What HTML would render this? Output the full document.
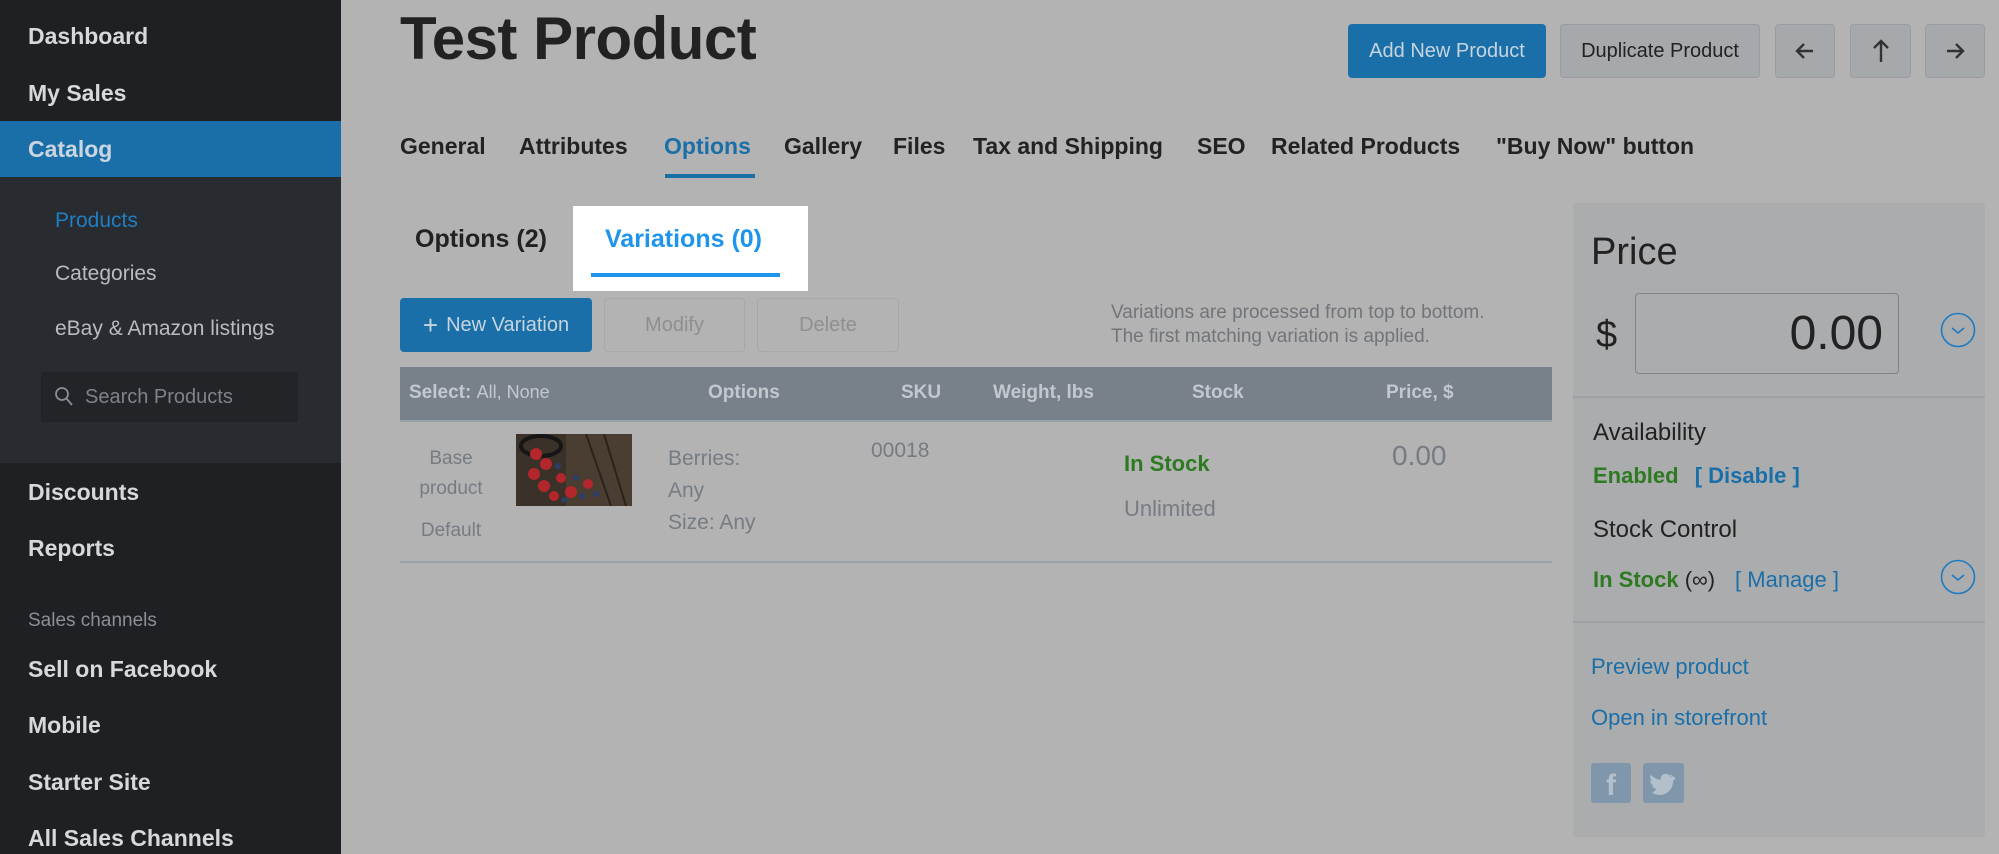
<!DOCTYPE html>
<html><head><meta charset="utf-8"><style>
*{margin:0;padding:0;box-sizing:border-box}
body{width:1999px;height:854px;overflow:hidden;background:#b3b3b3;font-family:"Liberation Sans",Arial,sans-serif;position:relative}
.a{position:absolute;white-space:nowrap}
.sb{position:absolute;left:0;top:0;width:341px;height:854px;background:#1e2024}
.side{color:#d6d8da;font-weight:bold;font-size:23px;left:28px}
.sub{color:#b9bcbf;font-size:21px;left:55px}
.tab{font-size:23px;font-weight:bold;color:#222;top:133px}
.btn{position:absolute;border-radius:4px;display:flex;align-items:center;justify-content:center;font-size:20px}
.hd{color:#c3c8cd;font-weight:bold;font-size:19px;top:382px}
.gray{color:#767c83;font-size:21px}
</style></head><body>
<div class="sb"></div>
<div class="a" style="left:0;top:121px;width:341px;height:56px;background:#1b6fa8"></div>
<div class="a" style="left:0;top:177px;width:341px;height:286px;background:#282b2f"></div>
<div class="a side" style="top:23px">Dashboard</div>
<div class="a side" style="top:80px">My Sales</div>
<div class="a side" style="top:136px;color:#c9d6e2">Catalog</div>
<div class="a sub" style="top:209px;color:#1f7fc4">Products</div>
<div class="a sub" style="top:262px">Categories</div>
<div class="a sub" style="top:317px">eBay &amp; Amazon listings</div>
<div class="a" style="left:41px;top:372px;width:257px;height:50px;background:#222528"></div>
<svg class="a" style="left:54px;top:386px" width="20" height="22" viewBox="0 0 20 22"><circle cx="8" cy="8" r="6" fill="none" stroke="#8a8e93" stroke-width="1.8"/><path d="M12.5 12.5L18 19" stroke="#8a8e93" stroke-width="1.8"/></svg>
<div class="a" style="left:85px;top:386px;font-size:20px;color:#7f8388">Search Products</div>
<div class="a side" style="top:479px">Discounts</div>
<div class="a side" style="top:535px">Reports</div>
<div class="a" style="left:28px;top:610px;font-size:19px;color:#8b8f94">Sales channels</div>
<div class="a side" style="top:656px">Sell on Facebook</div>
<div class="a side" style="top:712px">Mobile</div>
<div class="a side" style="top:769px">Starter Site</div>
<div class="a side" style="top:825px">All Sales Channels</div>

<div class="a" style="left:400px;top:4px;font-size:60px;font-weight:bold;color:#222;letter-spacing:-0.5px">Test Product</div>

<div class="btn" style="left:1348px;top:24px;width:198px;height:54px;background:#1b6fa8;color:#c5d4e0">Add New Product</div>
<div class="btn" style="left:1560px;top:24px;width:200px;height:54px;background:#a6a9ab;border:1px solid #999da1;color:#222">Duplicate Product</div>
<div class="btn" style="left:1775px;top:24px;width:60px;height:54px;background:#a6a9ab;border:1px solid #999da1"><svg width="24" height="24" viewBox="0 0 24 24"><path d="M20 12H4M11 5L4 12L11 19" fill="none" stroke="#333" stroke-width="2.4"/></svg></div>
<div class="btn" style="left:1850px;top:24px;width:61px;height:54px;background:#a6a9ab;border:1px solid #999da1"><svg width="24" height="26" viewBox="0 0 24 26"><path d="M12 24V3M5 10L12 3L19 10" fill="none" stroke="#333" stroke-width="2.4"/></svg></div>
<div class="btn" style="left:1925px;top:24px;width:60px;height:54px;background:#a6a9ab;border:1px solid #999da1"><svg width="24" height="24" viewBox="0 0 24 24"><path d="M4 12H20M13 5L20 12L13 19" fill="none" stroke="#333" stroke-width="2.4"/></svg></div>

<div class="a tab" style="left:400px">General</div>
<div class="a tab" style="left:519px">Attributes</div>
<div class="a tab" style="left:664px;color:#1b6fa8">Options</div>
<div class="a" style="left:665px;top:174px;width:90px;height:4px;background:#1b6fa8"></div>
<div class="a tab" style="left:784px">Gallery</div>
<div class="a tab" style="left:893px">Files</div>
<div class="a tab" style="left:973px">Tax and Shipping</div>
<div class="a tab" style="left:1197px">SEO</div>
<div class="a tab" style="left:1271px">Related Products</div>
<div class="a tab" style="left:1496px">"Buy Now" button</div>

<div class="a" style="left:415px;top:225px;font-size:25px;font-weight:bold;color:#222">Options (2)</div>
<div class="a" style="left:573px;top:206px;width:235px;height:85px;background:#fff"></div>
<div class="a" style="left:605px;top:225px;font-size:25px;font-weight:bold;color:#1e95ea">Variations (0)</div>
<div class="a" style="left:591px;top:273px;width:189px;height:4px;background:#1e95ea"></div>

<div class="btn" style="left:400px;top:298px;width:192px;height:54px;background:#1b6fa8;color:#c5d4e0"><span style="font-size:26px;margin-right:8px;font-weight:300">+</span>New Variation</div>
<div class="btn" style="left:604px;top:298px;width:141px;height:54px;border:1px solid #a8a8a8;color:#8f8f8f">Modify</div>
<div class="btn" style="left:757px;top:298px;width:142px;height:54px;border:1px solid #a8a8a8;color:#8f8f8f">Delete</div>
<div class="a" style="left:1111px;top:301px;font-size:19px;color:#717579;line-height:24px">Variations are processed from top to bottom.<br>The first matching variation is applied.</div>

<div class="a" style="left:400px;top:367px;width:1152px;height:55px;background:#78818a;border-bottom:2px solid #9aa1a8"></div>
<div class="a hd" style="left:409px">Select: <span style="font-weight:normal;font-size:18px">All, None</span></div>
<div class="a hd" style="left:708px">Options</div>
<div class="a hd" style="left:901px">SKU</div>
<div class="a hd" style="left:993px">Weight, lbs</div>
<div class="a hd" style="left:1192px">Stock</div>
<div class="a hd" style="left:1386px">Price, $</div>

<div class="a gray" style="left:401px;width:100px;text-align:center;top:444px;font-size:19px;line-height:30px">Base<br>product</div>
<div class="a gray" style="left:401px;width:100px;text-align:center;top:520px;font-size:19px">Default</div>
<svg class="a" style="left:516px;top:434px" width="116" height="72" viewBox="0 0 116 72"><rect width="116" height="72" fill="#3a3129"/><rect x="50" width="66" height="72" fill="#4a3d31"/><path d="M70 0L95 72M88 0L110 72" stroke="#2a221b" stroke-width="2"/><ellipse cx="25" cy="12" rx="20" ry="10" fill="none" stroke="#161616" stroke-width="4"/><g fill="#b3262b"><circle cx="20" cy="20" r="6"/><circle cx="30" cy="30" r="6"/><circle cx="18" cy="40" r="6"/><circle cx="28" cy="52" r="6"/><circle cx="45" cy="44" r="5"/><circle cx="55" cy="58" r="6"/><circle cx="72" cy="50" r="5"/><circle cx="38" cy="62" r="5"/></g><g fill="#2d3e68"><circle cx="42" cy="32" r="3"/><circle cx="60" cy="44" r="3"/><circle cx="66" cy="62" r="3"/><circle cx="80" cy="60" r="3"/><circle cx="48" cy="66" r="3"/></g></svg>
<div class="a gray" style="left:668px;top:443px;line-height:32px">Berries:<br>Any<br>Size: Any</div>
<div class="a gray" style="left:871px;top:439px">00018</div>
<div class="a" style="left:1124px;top:451px;font-size:22px;font-weight:bold;color:#2e7a22">In Stock</div>
<div class="a gray" style="left:1124px;top:496px;font-size:22px">Unlimited</div>
<div class="a gray" style="left:1392px;top:440px;font-size:28px">0.00</div>
<div class="a" style="left:400px;top:561px;width:1152px;height:2px;background:#9ba1a8"></div>

<div class="a" style="left:1573px;top:203px;width:412px;height:634px;background:#abacae;border-radius:3px"></div>
<div class="a" style="left:1591px;top:231px;font-size:38px;color:#222">Price</div>
<div class="a" style="left:1596px;top:314px;font-size:38px;color:#222">$</div>
<div class="a" style="left:1635px;top:293px;width:264px;height:81px;border:1.5px solid #7e858c;border-radius:4px"></div>
<div class="a" style="left:1635px;top:306px;width:248px;text-align:right;font-size:48px;color:#222">0.00</div>
<svg class="a" style="left:1940px;top:312px" width="36" height="36" viewBox="0 0 36 36"><circle cx="18" cy="18" r="16.5" fill="none" stroke="#1f7ac0" stroke-width="1.6"/><path d="M12 16L18 21L24 16" fill="none" stroke="#1f7ac0" stroke-width="1.6"/></svg>
<div class="a" style="left:1573px;top:396px;width:412px;height:2px;background:#9da2a7"></div>
<div class="a" style="left:1593px;top:419px;font-size:24px;color:#222">Availability</div>
<div class="a" style="left:1593px;top:463px;font-size:22px;font-weight:bold;color:#2e7a22">Enabled <span style="color:#1b6fa8;margin-left:10px">[ Disable ]</span></div>
<div class="a" style="left:1593px;top:516px;font-size:24px;color:#222">Stock Control</div>
<div class="a" style="left:1593px;top:567px;font-size:22px;font-weight:bold;color:#2e7a22">In Stock <span style="color:#222;font-weight:normal">(∞)</span><span style="color:#1b6fa8;font-weight:normal;margin-left:20px">[ Manage ]</span></div>
<svg class="a" style="left:1940px;top:559px" width="36" height="36" viewBox="0 0 36 36"><circle cx="18" cy="18" r="16.5" fill="none" stroke="#1f7ac0" stroke-width="1.6"/><path d="M12 16L18 21L24 16" fill="none" stroke="#1f7ac0" stroke-width="1.6"/></svg>
<div class="a" style="left:1573px;top:621px;width:412px;height:2px;background:#9da2a7"></div>
<div class="a" style="left:1591px;top:654px;font-size:22px;color:#1b6fa8">Preview product</div>
<div class="a" style="left:1591px;top:705px;font-size:22px;color:#1b6fa8">Open in storefront</div>
<div class="a" style="left:1591px;top:763px;width:40px;height:40px;background:#8097ab;border-radius:3px;color:#b3c0cc;font-weight:bold;font-size:30px;text-align:center;line-height:46px">f</div>
<div class="a" style="left:1643px;top:763px;width:41px;height:40px;background:#8097ab;border-radius:3px"><svg width="41" height="40" viewBox="0 0 41 40"><path d="M30 13c-1 .5-2 .7-3 .8 1-.6 1.8-1.6 2-2.6-1 .6-2 1-3 1.2a4.8 4.8 0 0 0-8.2 4.4c-4-.2-7.5-2.100-9.9-5-.4.7-.7 1.600-.7 2.400 0 1.700.9 3.200 2.100 4-.8 0-1.500-.2-2.200-.6 0 2.300 1.700 4.300 3.900 4.700-.7.200-1.500.2-2.200.1.600 1.900 2.400 3.300 4.500 3.300A9.700 9.700 0 0 1 9 29.800 13.600 13.600 0 0 0 16.400 32c8.900 0 13.700-7.300 13.700-13.700v-.6c1-.7 1.800-1.500 2.400-2.500z" fill="#b3c0cc"/></svg></div>
</body></html>
